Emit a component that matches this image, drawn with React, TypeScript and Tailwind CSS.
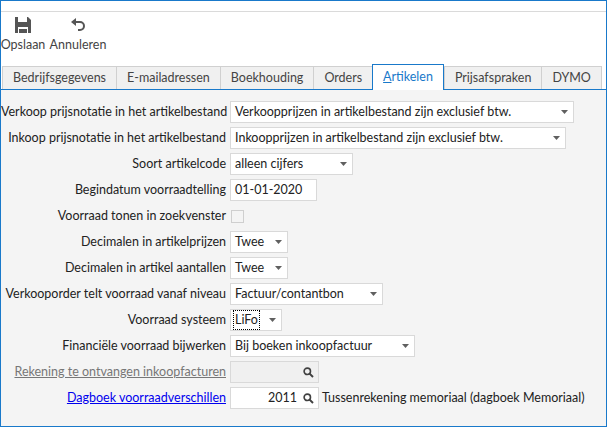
import React from "react";

const Arrow = () => (
  <svg width="7" height="4" viewBox="0 0 7 4" className="ml-auto mr-[5px] shrink-0"><path d="M0 0h7L3.5 4z" fill="#606060" /></svg>
);
const Search = () => (
  <svg width="11" height="11" viewBox="0 0 11 11"><circle cx="4.3" cy="4.3" r="3.2" fill="none" stroke="#404040" strokeWidth="1.6" /><path d="M6.6 6.6L10 10" stroke="#404040" strokeWidth="2" /></svg>
);

function Sel({ w, text, focus }: { w: string; text: string; focus?: boolean }) {
  return (
    <div className={`${w} h-[22px] bg-white border border-[#d9d9d9] flex items-center pl-[3px] whitespace-nowrap`}>
      <span className={focus ? "outline outline-1 outline-dotted outline-black px-[1px]" : "px-[1px]"}>{text}</span>
      <Arrow />
    </div>
  );
}

function Row({ label, children, labelCls }: { label: string; children: React.ReactNode; labelCls?: string }) {
  return (
    <div className="flex items-center h-[26px]">
      <div className={`w-[229px] text-right pr-[4px] shrink-0 whitespace-nowrap ${labelCls ?? ""}`}>{label}</div>
      {children}
    </div>
  );
}

export default function App() {
  const tabs = ["Bedrijfsgegevens", "E-mailadressen", "Boekhouding", "Orders", "Artikelen", "Prijsafspraken", "DYMO"];
  return (
    <div className="w-[607px] h-[427px] border border-[#1979ca] bg-white text-[12.5px] text-[#222] flex flex-col overflow-hidden" style={{ fontFamily: 'Lato, "Noto Sans", sans-serif' }}>
      <div className="h-[11px] border-b border-[#dadada] shrink-0" />
      <div className="flex h-[53px] shrink-0 pt-[4px] text-[#444] gap-[2px]">
        <div className="flex flex-col items-center w-[44px]">
          <svg width="18" height="16" viewBox="0 0 18 16" className="mt-[1px]"><path d="M1 0h13l3 3v13H1z" fill="#555" /><rect x="4" y="0" width="9" height="5" fill="#fff" /><rect x="4" y="10" width="10" height="6" fill="#fff" /><rect x="5" y="12" width="8" height="4" fill="#555" /></svg>
          <span className="mt-[3px]">Opslaan</span>
        </div>
        <div className="flex flex-col items-center w-[62px]">
          <svg width="16" height="16" viewBox="0 0 16 16" className="mt-[1px]"><path d="M4 5h6a4 4 0 010 8H8" fill="none" stroke="#555" strokeWidth="2" /><path d="M1 5l5-4v8z" fill="#555" /></svg>
          <span className="mt-[3px]">Annuleren</span>
        </div>
      </div>
      <div className="flex items-end h-[25px] shrink-0 pl-[1px] border-b border-[#1979ca] relative">
        {tabs.map((t) =>
          t === "Artikelen" ? (
            <div key={t} className="h-[26px] px-[10px] flex items-center bg-white border border-[#1979ca] border-b-0 text-[#1979ca] mb-[-1px] z-10 whitespace-nowrap"><span><u>A</u>rtikelen</span></div>
          ) : (
            <div key={t} className="h-[23px] px-[10px] flex items-center bg-[#f0f0f0] border border-[#d0d0d0] border-b-0 text-[#444] -mr-[1px] whitespace-nowrap">{t}</div>
          )
        )}
      </div>
      <div className="flex-1 bg-[#f4f4f4] pt-[9px] flex flex-col">
        <Row label="Verkoop prijsnotatie in het artikelbestand"><Sel w="w-[344px]" text="Verkoopprijzen in artikelbestand zijn exclusief btw." /></Row>
        <Row label="Inkoop prijsnotatie in het artikelbestand"><Sel w="w-[336px]" text="Inkoopprijzen in artikelbestand zijn exclusief btw." /></Row>
        <Row label="Soort artikelcode"><Sel w="w-[123px]" text="alleen cijfers" /></Row>
        <Row label="Begindatum voorraadtelling"><div className="w-[87px] h-[22px] bg-white border border-[#d9d9d9] flex items-center pl-[4px]">01-01-2020</div></Row>
        <Row label="Voorraad tonen in zoekvenster"><div className="w-[13px] h-[13px] border border-[#cfcfcf] bg-[#f4f4f4] ml-[1px]" /></Row>
        <Row label="Decimalen in artikelprijzen"><Sel w="w-[58px]" text="Twee" /></Row>
        <Row label="Decimalen in artikel aantallen"><Sel w="w-[58px]" text="Twee" /></Row>
        <Row label="Verkooporder telt voorraad vanaf niveau"><Sel w="w-[153px]" text="Factuur/contantbon" /></Row>
        <Row label="Voorraad systeem"><Sel w="w-[52px]" text="LiFo" focus /></Row>
        <Row label="Financiële voorraad bijwerken"><Sel w="w-[185px]" text="Bij boeken inkoopfactuur" /></Row>
        <Row label="Rekening te ontvangen inkoopfacturen" labelCls="text-[#777] underline"><div className="w-[89px] h-[22px] bg-[#f0f0f0] border border-[#d9d9d9] flex items-center justify-end pr-[4px]"><Search /></div></Row>
        <Row label="Dagboek voorraadverschillen" labelCls="text-[#0000ee] underline">
          <div className="w-[89px] h-[22px] bg-white border border-[#d9d9d9] flex items-center justify-end pr-[4px] gap-[6px]"><span>2011</span><Search /></div>
          <span className="ml-[3px] whitespace-nowrap">Tussenrekening memoriaal (dagboek Memoriaal)</span>
        </Row>
      </div>
    </div>
  );
}
